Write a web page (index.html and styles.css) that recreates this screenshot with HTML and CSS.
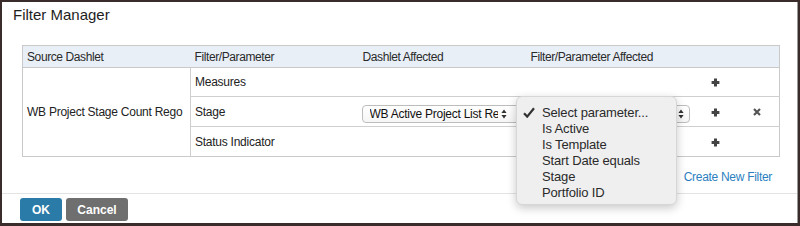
FILE: index.html
```html
<!DOCTYPE html>
<html>
<head>
<meta charset="utf-8">
<link rel="stylesheet" href="styles.css">
</head>
<body>
<div class="dialog">
  <div class="title">Filter Manager</div>
  <table class="grid">
    <colgroup>
      <col class="c-wide"><col class="c-wide"><col class="c-wide"><col class="c-wide"><col class="c-plus"><col class="c-del">
    </colgroup>
    <thead>
      <tr>
        <th>Source Dashlet</th>
        <th>Filter/Parameter</th>
        <th>Dashlet Affected</th>
        <th>Filter/Parameter Affected</th>
        <th></th>
        <th></th>
      </tr>
    </thead>
    <tbody>
      <tr class="first">
        <td class="source" rowspan="3">WB Project Stage Count Rego</td>
        <td>Measures</td>
        <td></td>
        <td></td>
        <td class="icon"><svg class="plus" width="9" height="9" viewBox="0 0 9 9"><path d="M4.5 0.6V8.4M0.6 4.5H8.4"/></svg></td>
        <td class="icon"></td>
      </tr>
      <tr>
        <td>Stage</td>
        <td><div class="select select-dashlet"><span class="select-text">WB Active Project List Report</span><svg class="arrows" width="6" height="10" viewBox="0 0 6 10"><path d="M3 0.5L5.6 4H0.4Z M3 9.5L5.6 6H0.4Z"/></svg></div></td>
        <td><div class="select select-param"><span class="select-text">Select parameter...</span><svg class="arrows" width="6" height="10" viewBox="0 0 6 10"><path d="M3 0.5L5.6 4H0.4Z M3 9.5L5.6 6H0.4Z"/></svg></div></td>
        <td class="icon"><svg class="plus" width="9" height="9" viewBox="0 0 9 9"><path d="M4.5 0.6V8.4M0.6 4.5H8.4"/></svg></td>
        <td class="icon"><svg class="cross" width="8" height="8" viewBox="0 0 8 8"><path d="M1 1L7 7M7 1L1 7"/></svg></td>
      </tr>
      <tr>
        <td>Status Indicator</td>
        <td></td>
        <td></td>
        <td class="icon"><svg class="plus" width="9" height="9" viewBox="0 0 9 9"><path d="M4.5 0.6V8.4M0.6 4.5H8.4"/></svg></td>
        <td class="icon"></td>
      </tr>
    </tbody>
  </table>
  <div class="link-row"><a class="link">Create New Filter</a></div>
  <div class="footer">
    <button class="btn btn-ok">OK</button>
    <button class="btn btn-cancel">Cancel</button>
  </div>
  <div class="menu">
    <div class="menu-item selected"><svg class="check" width="12" height="11" viewBox="0 0 12 11"><path d="M1 6.2L4.2 9.6L11 1.2"/></svg>Select parameter...</div>
    <div class="menu-item">Is Active</div>
    <div class="menu-item">Is Template</div>
    <div class="menu-item">Start Date equals</div>
    <div class="menu-item">Stage</div>
    <div class="menu-item">Portfolio ID</div>
  </div>
</div>
</body>
</html>
```

FILE: styles.css
```css
html, body {
  margin: 0;
  padding: 0;
}
body {
  width: 800px;
  height: 226px;
  overflow: hidden;
  background: #3a2c2b;
  font-family: "Liberation Sans", Arial, Helvetica, sans-serif;
  color: #222;
  padding-top: 2px;
  box-sizing: border-box;
}
.dialog {
  position: relative;
  margin-left: 2px;
  width: 795px;
  height: 221px;
  background: #fff;
  border-right: 1px solid #9a9a9a;
  box-sizing: content-box;
}
.title {
  padding: 4px 0 0 11px;
  font-size: 15px;
  line-height: 18px;
  color: #1e1e1e;
}
.grid {
  margin: 21px 0 0 20px;
  width: 757px;
  table-layout: fixed;
  border-collapse: collapse;
  border: 1px solid #c9c9c9;
  font-size: 12px;
  letter-spacing: -0.25px;
}
.c-wide { width: 168px; }
.c-plus { width: 41px; }
.c-del { width: 44px; }
.grid th {
  background: #e9eff7;
  font-weight: normal;
  text-align: left;
  color: #2a2a2a;
  height: 21px;
  padding: 0 0 0 4px;
  border-bottom: 1px solid #c9c9c9;
  white-space: nowrap;
  letter-spacing: -0.4px;
}
.grid td {
  height: 29px;
  padding: 0 0 0 4px;
  border-top: 1px solid #cfcfcf;
  white-space: nowrap;
  color: #222;
}
.grid tr.first td {
  height: 28px;
}
.grid td.source {
  border-right: 1px solid #cfcfcf;
  padding-left: 4px;
}
.grid td.icon {
  text-align: center;
  padding: 0;
}
.plus {
  display: inline-block;
  vertical-align: middle;
  stroke: #444;
  stroke-width: 3;
  fill: none;
}
.cross {
  display: inline-block;
  vertical-align: middle;
  stroke: #555;
  stroke-width: 2.2;
  fill: none;
}
.select {
  display: flex;
  align-items: center;
  height: 18px;
  margin: 4px 0 0 -1px;
  box-sizing: border-box;
  border: 1px solid #bdbdbd;
  border-radius: 4px;
  background: linear-gradient(#ffffff, #f6f6f6);
  padding: 0 5px 0 7px;
  font-size: 12px;
  color: #111;
}
.select-dashlet {
  width: 160px;
  padding-right: 14px;
}
.select-param {
  width: 160px;
}
.select-text {
  flex: 1;
  overflow: hidden;
  white-space: nowrap;
}
.arrows {
  flex: none;
  margin-left: 3px;
  fill: #333;
}
.link-row {
  height: 36px;
  box-sizing: border-box;
  padding: 13px 25px 0 0;
  text-align: right;
  font-size: 12px;
  line-height: 14px;
  letter-spacing: -0.3px;
}
.link {
  color: #2b7fc0;
}
.footer {
  border-top: 1px solid #e3e3e3;
  padding: 4px 0 0 18px;
  display: flex;
  gap: 4px;
}
.btn {
  height: 23px;
  border: none;
  border-radius: 3px;
  color: #fff;
  font-family: "Liberation Sans", Arial, sans-serif;
  font-weight: bold;
  font-size: 12px;
  padding: 0;
}
.btn-ok {
  width: 42px;
  background: #2a7ba8;
}
.btn-cancel {
  width: 62px;
  background: #6f6f6f;
}
.menu {
  position: absolute;
  left: 514px;
  top: 94px;
  width: 161px;
  height: 109px;
  box-sizing: border-box;
  padding-top: 8px;
  background: #efefef;
  border: 1px solid #d6d6d6;
  border-radius: 6px;
  box-shadow: 0 3px 10px rgba(0, 0, 0, 0.22);
}
.menu-item {
  position: relative;
  height: 16px;
  line-height: 16px;
  padding-left: 25px;
  font-size: 13px;
  letter-spacing: -0.15px;
  color: #2a2a2a;
  white-space: nowrap;
}
.check {
  position: absolute;
  left: 6px;
  top: 2px;
  stroke: #333;
  stroke-width: 2.2;
  fill: none;
}
```
